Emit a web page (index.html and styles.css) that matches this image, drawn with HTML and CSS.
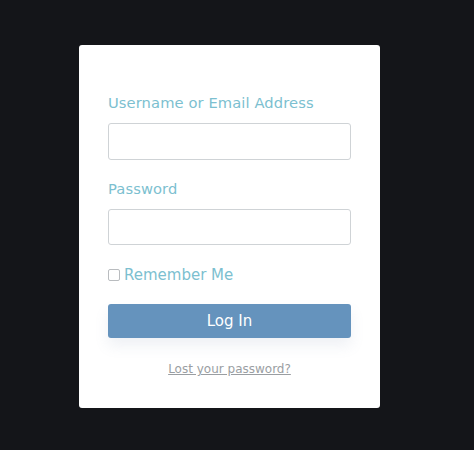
FILE: index.html
```html
<!DOCTYPE html>
<html>
<head>
<meta charset="utf-8">
<link rel="stylesheet" href="styles.css">
</head>
<body>
<div class="card">
  <form class="form">
    <label class="label" for="user">Username or Email Address</label>
    <input class="input" id="user" type="text">
    <label class="label label-pw" for="pw">Password</label>
    <input class="input input-pw" id="pw" type="password">
    <div class="remember">
      <span class="check"></span>
      <span class="remember-text">Remember Me</span>
    </div>
    <button class="button" type="button">Log In</button>
  </form>
  <div class="lost"><a href="#" class="lost-link">Lost your password?</a></div>
</div>
</body>
</html>
```

FILE: styles.css
```css
html, body {
  margin: 0;
  padding: 0;
  background: #141519;
  height: 100%;
}
body {
  font-family: "DejaVu Sans", sans-serif;
}
.card {
  margin: 45px 0 0 79px;
  width: 301px;
  height: 363px;
  box-sizing: border-box;
  background: #ffffff;
  border-radius: 3px;
  padding: 49px 29px 0 29px;
}
.form {
  display: flex;
  flex-direction: column;
}
.label {
  font-size: 14.7px;
  line-height: 18px;
  color: #7cbfd0;
  letter-spacing: 0.1px;
}
.label-pw {
  margin-top: 20px;
}
.input {
  margin-top: 11px;
  height: 37px;
  box-sizing: border-box;
  border: 1px solid #cfd3d6;
  border-radius: 3px;
  background: #fff;
  padding: 0 8px;
  outline: none;
}
.input-pw {
  height: 36px;
}
.remember {
  display: flex;
  align-items: center;
  gap: 4px;
  margin-top: 21px;
  height: 18px;
}
.check {
  width: 12px;
  height: 12px;
  box-sizing: border-box;
  border: 1px solid #b9bcbf;
  border-radius: 2px;
  background: #fff;
}
.remember-text {
  font-size: 15px;
  line-height: 18px;
  color: #7cbfd0;
}
.button {
  margin-top: 20px;
  height: 34px;
  border: none;
  border-radius: 3px;
  background: #6593bd;
  color: #ffffff;
  font-family: "DejaVu Sans", sans-serif;
  font-size: 15px;
  box-shadow: 0 8px 14px rgba(120, 140, 170, 0.12);
}
.lost {
  margin-top: 22px;
  text-align: center;
  line-height: 16px;
}
.lost-link {
  font-size: 12px;
  color: #9a9ea2;
  text-decoration: underline;
}
```
